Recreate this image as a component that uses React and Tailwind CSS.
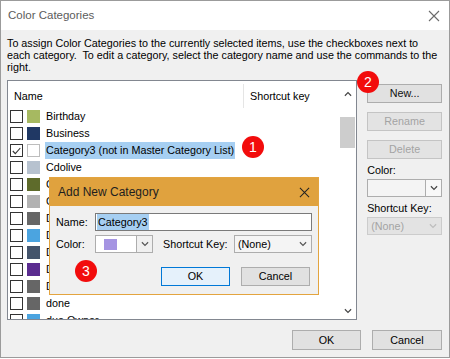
import React from "react";

const rows = [
  { name: "Birthday", color: "#a6b961" },
  { name: "Business", color: "#203864" },
  { name: "Category3 (not in Master Category List)", color: "#ffffff", checked: true, selected: true },
  { name: "Cdolive", color: "#b7c2cf" },
  { name: "Colive", color: "#5e6b2b" },
  { name: "Cgray", color: "#b2b2b2" },
  { name: "Dgray", color: "#666666" },
  { name: "Dblue", color: "#4ba4e0" },
  { name: "Dslate", color: "#44546b" },
  { name: "Dpurple", color: "#5b2c90" },
  { name: "Dark", color: "#666666" },
  { name: "done", color: "#666666" },
  { name: "due Owner", color: "#4ba4e0" },
];

const Chevron = ({ up = false, color = "#555", w = 9 }) => (
  <svg width={w} height="6" viewBox="0 0 9 6" fill="none">
    <path
      d={up ? "M1 5 L4.5 1.5 L8 5" : "M1 1 L4.5 4.5 L8 1"}
      stroke={color}
      strokeWidth="1.3"
    />
  </svg>
);

const CloseX = ({ color = "#6b6b6b", size = 12 }) => (
  <svg width={size} height={size} viewBox="0 0 12 12" fill="none">
    <path d="M1 1 L11 11 M11 1 L1 11" stroke={color} strokeWidth="1.1" />
  </svg>
);

const Badge = ({ n, className }) => (
  <div
    className={`absolute w-[22px] h-[22px] rounded-full bg-[#f20c0c] text-white text-[14px] leading-none flex items-center justify-center ${className}`}
  >
    {n}
  </div>
);

const Checkbox = ({ checked }) => (
  <div className="w-[13px] h-[13px] border border-[#333333] bg-white flex items-center justify-center shrink-0">
    {checked && (
      <svg width="9" height="8" viewBox="0 0 9 8" fill="none">
        <path d="M0.8 4 L3.3 6.6 L8.3 1" stroke="#333" strokeWidth="1.1" />
      </svg>
    )}
  </div>
);

export default function App() {
  return (
    <div className="relative w-[450px] h-[358px] border border-[#9b9b9b] bg-[#f0f0f0] flex flex-col overflow-hidden text-[10.75px] text-black font-['Liberation_Sans',Arial,sans-serif]">
      {/* title bar */}
      <div className="h-[29px] bg-white flex items-center justify-between pl-[7px] pr-[9px] shrink-0">
        <span className="text-[11.5px] text-[#5c5c5c]">Color Categories</span>
        <CloseX />
      </div>

      <div className="flex-1 flex flex-col pl-[6px] pr-[7px] pt-[7px]">
        <p className="leading-[12px] whitespace-nowrap">
          To assign Color Categories to the currently selected items, use the checkboxes next to
          <br />
          each category.&nbsp; To edit a category, select the category name and use the commands to the
          <br />
          right.
        </p>

        <div className="mt-[7px] flex gap-[10px]">
          {/* category list */}
          <div className="w-[351px] h-[240px] border border-[#828790] bg-white flex overflow-hidden">
            <div className="flex-1 pt-[3px] overflow-hidden">
              <div className="h-[24px] flex">
                <div className="w-[236px] pl-[6px] flex items-center border-r border-[#e5e5e5]">Name</div>
                <div className="pl-[6px] flex items-center">Shortcut key</div>
              </div>
              {rows.map((r) => (
                <div key={r.name} className="h-[17px] flex items-center pl-[2px] whitespace-nowrap">
                  <Checkbox checked={r.checked} />
                  <div
                    className="ml-[4px] w-[13px] h-[13px] shrink-0 border border-[#d0d0d0]"
                    style={{ background: r.color, borderColor: r.color === "#ffffff" ? "#bdbdbd" : r.color }}
                  />
                  <span className={`ml-[5px] px-[1px] ${r.selected ? "bg-[#a6cff2]" : ""}`}>{r.name}</span>
                </div>
              ))}
            </div>
            {/* scrollbar */}
            <div className="w-[17px] flex flex-col bg-white">
              <div className="h-[26px] flex items-center justify-center">
                <Chevron up color="#444" w={8} />
              </div>
              <div className="flex-1 px-[1px]">
                <div className="mt-[10px] h-[31px] bg-[#cdcdcd]" />
              </div>
              <div className="h-[17px] flex items-center justify-center">
                <Chevron color="#444" w={8} />
              </div>
            </div>
          </div>

          {/* right commands */}
          <div className="w-[75px] pt-[4px] flex flex-col">
            <button className="h-[19px] border border-[#adadad] bg-[#e1e1e1] text-[#111]">New...</button>
            <button className="mt-[9px] h-[19px] border border-[#c4c4c4] bg-[#e3e3e3] text-[#a3a3a3]">Rename</button>
            <button className="mt-[9px] h-[19px] border border-[#c4c4c4] bg-[#e3e3e3] text-[#a3a3a3]">Delete</button>
            <div className="mt-[5px] h-[13px] leading-[13px]">Color:</div>
            <div className="mt-[2px] h-[18px] border border-[#adadad] bg-[#f4f4f4] flex">
              <div className="flex-1" />
              <div className="w-[16px] border-l border-[#adadad] bg-[#f8f8f8] flex items-center justify-center">
                <Chevron color="#444" w={8} />
              </div>
            </div>
            <div className="mt-[5px] h-[13px] leading-[13px]">Shortcut Key:</div>
            <div className="mt-[2px] h-[18px] border border-[#cccccc] bg-[#e3e3e3] flex items-center pl-[3px] pr-[4px] text-[#a3a3a3]">
              <span className="flex-1">(None)</span>
              <Chevron color="#bdbdbd" w={8} />
            </div>
          </div>
        </div>

        <div className="mt-[10px] flex justify-end gap-[11px]">
          <button className="w-[69px] h-[20px] border border-[#adadad] bg-[#e1e1e1]">OK</button>
          <button className="w-[70px] h-[20px] border border-[#adadad] bg-[#e1e1e1]">Cancel</button>
        </div>
      </div>

      {/* Add New Category dialog */}
      <div className="absolute left-[48px] top-[176px] w-[270px] h-[118px] border border-[#e3a43f] bg-[#f0f0f0] flex flex-col">
        <div className="h-[28px] bg-[#e0a23e] flex items-center justify-between pl-[8px] pr-[8px] shrink-0">
          <span className="text-[12px] text-[#1e1e1e]">Add New Category</span>
          <CloseX color="#222" size={11} />
        </div>
        <div className="px-[6px] pt-[7px] flex flex-col">
          <div className="h-[18px] flex items-center">
            <span className="w-[39px]">Name:</span>
            <div className="flex-1 h-[18px] border border-[#7a7a7a] bg-white flex items-center px-[1px]">
              <span className="bg-[#a6cff2] px-[1px]">Category3</span>
            </div>
          </div>
          <div className="mt-[4px] h-[18px] flex items-center">
            <span className="w-[39px]">Color:</span>
            <div className="w-[58px] h-[18px] border border-[#adadad] bg-white flex">
              <div className="flex-1 flex items-center pl-[8px]">
                <div className="w-[13px] h-[11px] bg-[#a594e2]" />
              </div>
              <div className="w-[16px] border-l border-[#adadad] bg-[#f0f0f0] flex items-center justify-center">
                <Chevron color="#555" w={8} />
              </div>
            </div>
            <span className="ml-[10px] w-[71px]">Shortcut Key:</span>
            <div className="flex-1 h-[18px] border border-[#adadad] bg-[#f4f4f4] flex items-center pl-[3px] pr-[4px]">
              <span className="flex-1">(None)</span>
              <Chevron color="#555" w={8} />
            </div>
          </div>
          <div className="mt-[14px] flex justify-end gap-[11px] pr-[2px]">
            <button className="w-[69px] h-[19px] border border-[#0078d7] bg-[#e5f1fb]">OK</button>
            <button className="w-[69px] h-[19px] border border-[#adadad] bg-[#e1e1e1]">Cancel</button>
          </div>
        </div>
      </div>

      <Badge n="1" className="left-[241px] top-[135px]" />
      <Badge n="2" className="left-[356px] top-[70px]" />
      <Badge n="3" className="left-[74px] top-[259px]" />
    </div>
  );
}
